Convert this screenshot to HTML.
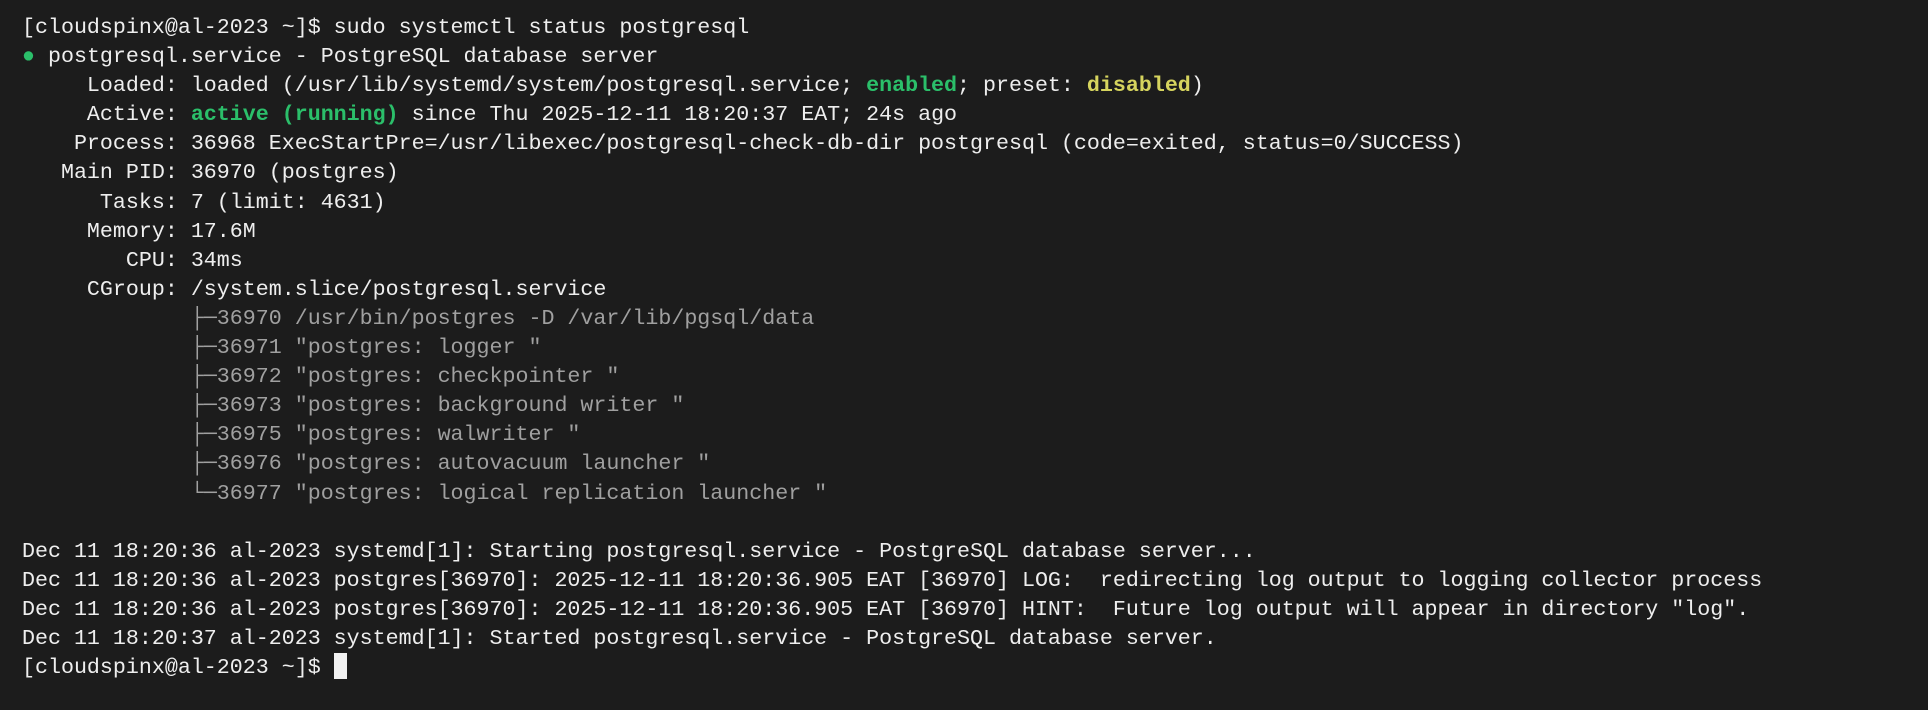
<!DOCTYPE html>
<html><head><meta charset="utf-8"><style>
html,body{margin:0;padding:0;background:#1c1c1c;width:1928px;height:710px;overflow:hidden}
pre{margin:0;position:absolute;left:22px;top:13px;font-family:"Liberation Mono","DejaVu Sans Mono",monospace;font-size:21.65px;line-height:29.1px;color:#eeeeee}
.g{color:#2bbf6a;font-weight:bold}
.y{color:#d6d45e;font-weight:bold}
.d{color:#a0a0a0}
.c{display:inline-block;width:13px;height:26px;background:#f2f2f2;vertical-align:-6px}
</style></head><body><pre>[cloudspinx@al-2023 ~]$ sudo systemctl status postgresql
<span class="g">●</span> postgresql.service - PostgreSQL database server
     Loaded: loaded (/usr/lib/systemd/system/postgresql.service; <span class="g">enabled</span>; preset: <span class="y">disabled</span>)
     Active: <span class="g">active (running)</span> since Thu 2025-12-11 18:20:37 EAT; 24s ago
    Process: 36968 ExecStartPre=/usr/libexec/postgresql-check-db-dir postgresql (code=exited, status=0/SUCCESS)
   Main PID: 36970 (postgres)
      Tasks: 7 (limit: 4631)
     Memory: 17.6M
        CPU: 34ms
     CGroup: /system.slice/postgresql.service
             <span class="d">├─36970 /usr/bin/postgres -D /var/lib/pgsql/data</span>
             <span class="d">├─36971 "postgres: logger "</span>
             <span class="d">├─36972 "postgres: checkpointer "</span>
             <span class="d">├─36973 "postgres: background writer "</span>
             <span class="d">├─36975 "postgres: walwriter "</span>
             <span class="d">├─36976 "postgres: autovacuum launcher "</span>
             <span class="d">└─36977 "postgres: logical replication launcher "</span>

Dec 11 18:20:36 al-2023 systemd[1]: Starting postgresql.service - PostgreSQL database server...
Dec 11 18:20:36 al-2023 postgres[36970]: 2025-12-11 18:20:36.905 EAT [36970] LOG:  redirecting log output to logging collector process
Dec 11 18:20:36 al-2023 postgres[36970]: 2025-12-11 18:20:36.905 EAT [36970] HINT:  Future log output will appear in directory "log".
Dec 11 18:20:37 al-2023 systemd[1]: Started postgresql.service - PostgreSQL database server.
[cloudspinx@al-2023 ~]$ <span class="c"></span></pre></body></html>
